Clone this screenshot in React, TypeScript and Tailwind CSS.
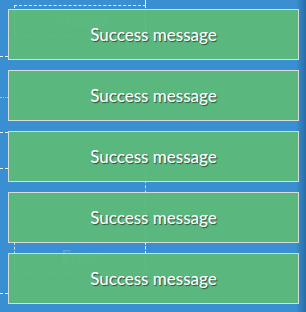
import React from 'react';

const messages = ['Success message', 'Success message', 'Success message', 'Success message', 'Success message'];

// ghost drag-guides that sit behind the toast stack
function Backdrop() {
  return (
    <div className="absolute inset-0 pointer-events-none">
      <div className="absolute left-[14px] top-[5px] w-[132px] h-[31px] border border-dashed border-white/90 border-b-white/40">
        <span className="block text-center text-[17px] leading-[28px] text-white/20">Success</span>
      </div>
      <div className="absolute left-[145px] top-0 h-[6px] border-l border-dashed border-white/90" />
      <div className="absolute left-[145px] top-[170px] h-[84px] border-l border-dashed border-white/70" />
      <div className="absolute left-[14px] top-[242px] w-[132px] h-[31px] border border-dashed border-white/70 border-b-white/30">
        <span className="block text-center text-[17px] leading-[28px] text-white/20">Error</span>
      </div>
      <div className="absolute left-0 top-[56px] w-[8px] border-t border-dashed border-white/90" />
      <div className="absolute left-0 top-[97px] w-[8px] border-t border-dotted border-white/50" />
      <div className="absolute left-0 top-[132px] w-[8px] border-t border-dashed border-white/90" />
      <div className="absolute left-0 top-[168px] w-[8px] border-t border-dashed border-white/90" />
      <div className="absolute left-0 top-[293px] w-[8px] border-t border-dashed border-white/90" />
      <div className="absolute right-0 top-0 bottom-0 w-[10px] bg-gradient-to-r from-transparent to-[#1f5f93]/70" />
    </div>
  );
}

export default function App() {
  return (
    <div className="relative w-[306px] h-[312px] bg-[#3a8fd2] overflow-hidden font-['Lato',sans-serif]">
      <Backdrop />
      <div className="relative flex flex-col gap-[10px] pt-[9px] pl-[8px] w-[299px]">
        {messages.map((m, i) => (
          <div
            key={i}
            className="h-[51px] flex items-center justify-center bg-[#5cbb78]/[0.93] border border-[#d6dcd6] text-white text-[17px] font-medium [text-shadow:1px_1px_1px_rgba(0,0,0,0.55)]"
          >
            {m}
          </div>
        ))}
      </div>
    </div>
  );
}
